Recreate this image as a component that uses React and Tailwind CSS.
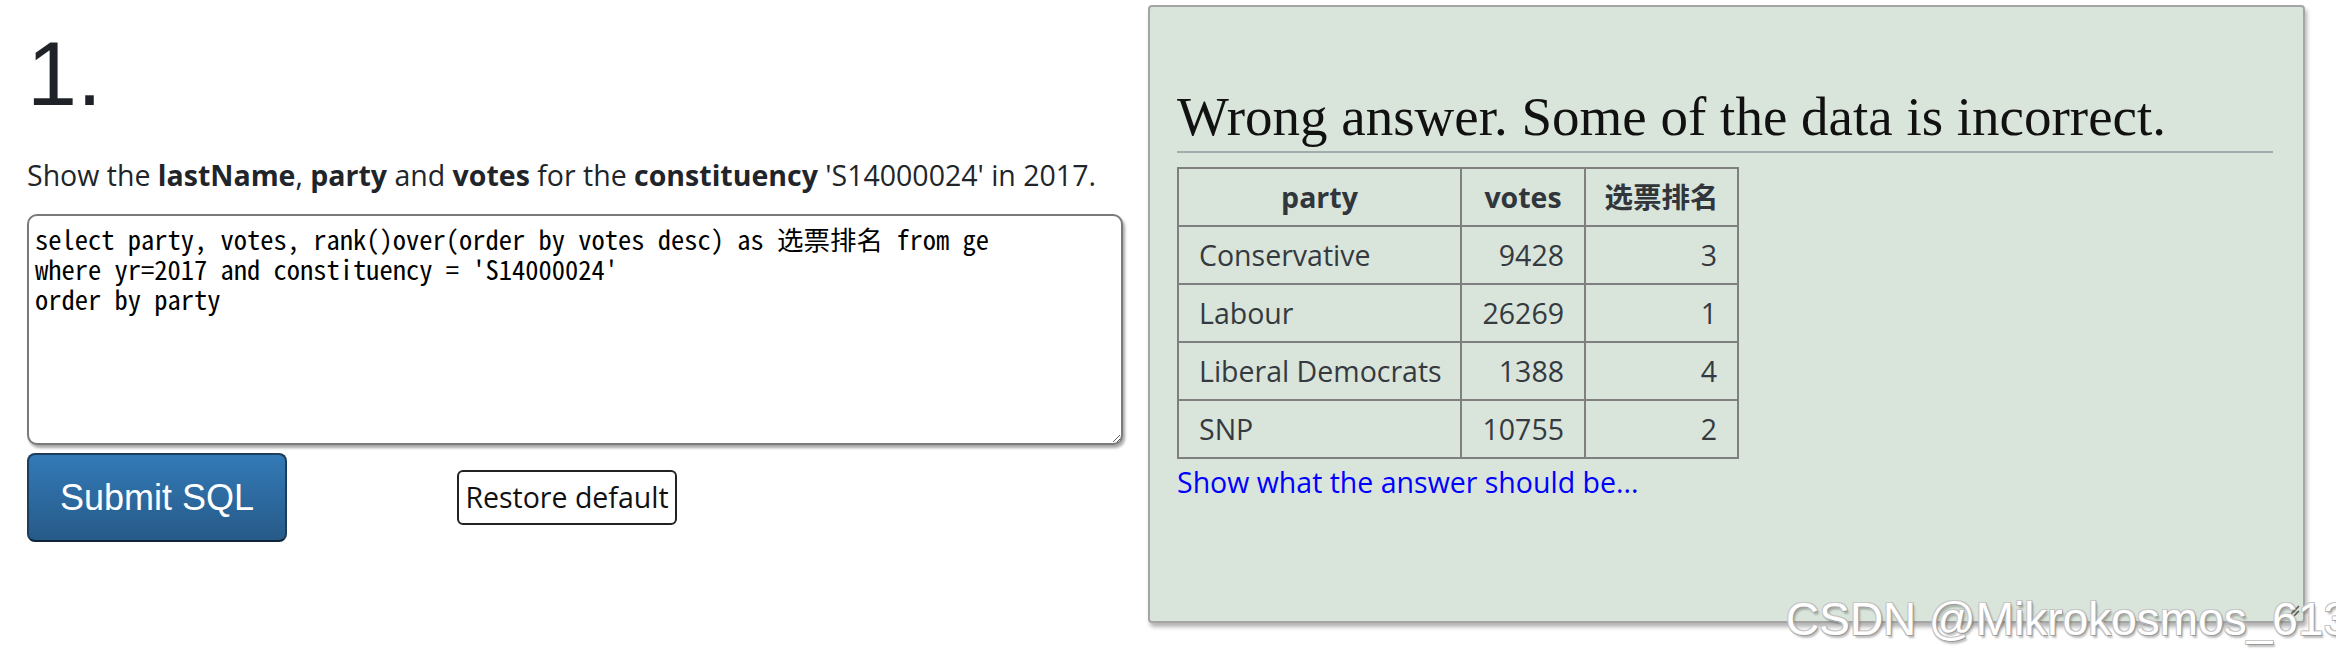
import React from 'react';

const sans = { fontFamily: '"Open Sans", "Noto Sans CJK SC", sans-serif' };

const rows = [
  { party: 'Conservative', votes: 9428, rank: 3 },
  { party: 'Labour', votes: 26269, rank: 1 },
  { party: 'Liberal Democrats', votes: 1388, rank: 4 },
  { party: 'SNP', votes: 10755, rank: 2 },
];

const sql = `select party, votes, rank()over(order by votes desc) as 选票排名 from ge
where yr=2017 and constituency = 'S14000024'
order by party`;

const QuestionPane = () => (
  <div className="ml-[27px] flex w-[1096px] shrink-0 flex-col">
    <h1
      className="mt-[29px] text-[90px] leading-[90px] font-light text-[#1f2226]"
      style={{ fontFamily: '"Liberation Sans", Arial, sans-serif' }}
    >
      1.
    </h1>
    <p className="mt-[39px] text-[28.5px] leading-[34px] text-[#212529] whitespace-nowrap" style={sans}>
      Show the <b>lastName</b>, <b>party</b> and <b>votes</b> for the <b>constituency</b> 'S14000024' in 2017.
    </p>
    <textarea
      defaultValue={sql}
      spellCheck={false}
      className="mt-[22px] h-[231px] w-[1096px] rounded-[10px] border-2 border-[#7a7a7a] bg-white px-[6px] pt-[8px] text-[26.5px] leading-[30px] text-black shadow-[2px_3px_3px_rgba(0,0,0,0.35)] outline-none"
      style={{ fontFamily: '"Noto Sans Mono CJK SC", "Liberation Mono", monospace' }}
    />
    <div className="mt-[8px] flex items-center">
      <button
        type="button"
        className="h-[89px] w-[260px] rounded-[8px] border-2 border-[#1c3d5c] border-b-[#0f2438] bg-gradient-to-b from-[#337ab7] to-[#265a88] text-[36px] text-white"
        style={{ fontFamily: '"Liberation Sans", Arial, sans-serif' }}
      >
        Submit SQL
      </button>
      <button
        type="button"
        className="ml-[170px] h-[55px] w-[220px] rounded-[6px] border-2 border-[#222] bg-white text-[28.5px] leading-none text-[#111]"
        style={sans}
      >
        Restore default
      </button>
    </div>
  </div>
);

const ResultPane = () => (
  <div className="relative mt-[5px] ml-[25px] h-[618px] w-[1157px] shrink-0 rounded-[4px] border-2 border-[#a5a5a5] bg-[#d9e4da] pt-[80px] pl-[27px] pr-[30px] shadow-[2px_4px_4px_rgba(0,0,0,0.3)]">
    <h2
      className="border-b-2 border-[#a4abad] pb-[4px] text-[55px] leading-[60px] text-[#111]"
      style={{ fontFamily: '"Liberation Serif", Georgia, serif' }}
    >
      Wrong answer. Some of the data is incorrect.
    </h2>
    <table
      className="mt-[14px] table-fixed border-collapse border-2 border-[#7f7f7f] text-[28.5px] text-[#343a40] whitespace-nowrap"
      style={sans}
    >
      <colgroup>
        <col className="w-[283px]" />
        <col className="w-[124px]" />
        <col className="w-[153px]" />
      </colgroup>
      <thead>
        <tr className="h-[58px]">
          <th className="border-2 border-[#7f7f7f] px-[20px] text-center font-bold text-[#30363b]">party</th>
          <th className="border-2 border-[#7f7f7f] px-[10px] text-center font-bold text-[#30363b]">votes</th>
          <th className="border-2 border-[#7f7f7f] px-[10px] text-center font-bold text-[#30363b]">选票排名</th>
        </tr>
      </thead>
      <tbody>
        {rows.map((r) => (
          <tr key={r.party} className="h-[58px]">
            <td className="border-2 border-[#7f7f7f] pl-[20px] pr-0 text-left">{r.party}</td>
            <td className="border-2 border-[#7f7f7f] px-[20px] text-right">{r.votes}</td>
            <td className="border-2 border-[#7f7f7f] px-[20px] text-right">{r.rank}</td>
          </tr>
        ))}
      </tbody>
    </table>
    <a href="#" className="mt-[6px] block w-fit text-[28.5px] leading-[34px] text-[#0000ff]" style={sans}>
      Show what the answer should be...
    </a>
    <svg className="absolute right-[3px] bottom-[3px]" width="14" height="14" viewBox="0 0 14 14">
      <path d="M13 2 L2 13 M13 7 L7 13" stroke="#555" strokeWidth="1.5" />
    </svg>
  </div>
);

export default function App() {
  return (
    <div className="relative flex h-[660px] w-[2336px] overflow-hidden bg-white">
      <QuestionPane />
      <ResultPane />
      <div
        className="pointer-events-none absolute left-[1786px] top-[596px] whitespace-nowrap text-[46px] leading-[46px] text-white"
        style={{
          fontFamily: '"Liberation Sans", Arial, sans-serif',
          textShadow: '1px 1px 0 #9a9a9a, -1px -1px 0 #c8c8c8, 1px -1px 0 #c0c0c0, -1px 1px 0 #c0c0c0, 2px 3px 2px rgba(0,0,0,0.25)',
        }}
      >
        CSDN @Mikrokosmos_613
      </div>
    </div>
  );
}
